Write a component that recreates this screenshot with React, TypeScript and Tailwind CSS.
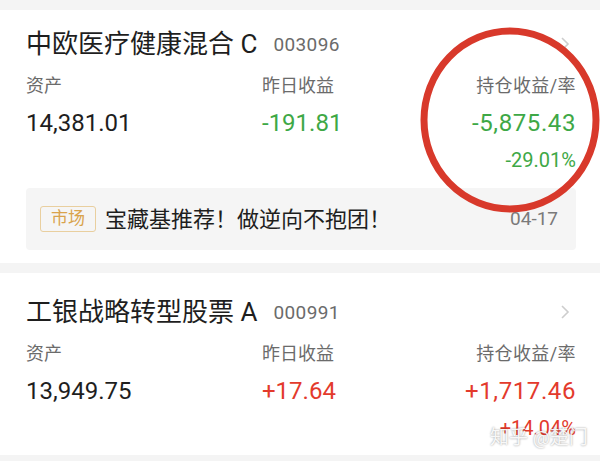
import type { ReactNode } from 'react'

type Fund = {
  name: string
  code: string
  asset: string
  yesterday: string
  holding: string
  rate: string
  up: boolean
}

const funds: Fund[] = [
  {
    name: '中欧医疗健康混合 C',
    code: '003096',
    asset: '14,381.01',
    yesterday: '-191.81',
    holding: '-5,875.43',
    rate: '-29.01%',
    up: false,
  },
  {
    name: '工银战略转型股票 A',
    code: '000991',
    asset: '13,949.75',
    yesterday: '+17.64',
    holding: '+1,717.46',
    rate: '+14.04%',
    up: true,
  },
]

function Chevron() {
  return (
    <svg width="10" height="16" viewBox="0 0 10 16" className="ml-auto mr-[6px] self-center">
      <polyline points="2,2 8,8 2,14" fill="none" stroke="#cdcdcd" strokeWidth="1.6" />
    </svg>
  )
}

function FundCard({ fund, top, children }: { fund: Fund; top: string; children?: ReactNode }) {
  const color = fund.up ? 'text-[#e33a2c]' : 'text-[#3ea846]'
  return (
    <section className={`bg-white pl-[26px] pr-[24px] ${top}`}>
      <div className="flex h-[36px] items-center">
        <span className="whitespace-pre text-[26px] leading-[36px] text-[#1e1e1e]">{fund.name}</span>
        <span className="ml-[16px] mt-[2px] text-[19px] leading-[36px] tracking-[0.4px] text-[#6b6b6b]">
          {fund.code}
        </span>
        <Chevron />
      </div>
      <div className="mt-[12px] grid grid-cols-[236px_1fr_auto] text-[18px] leading-[24px] text-[#6b6b6b]">
        <span>资产</span>
        <span>昨日收益</span>
        <span className="text-right tracking-[0.4px]">持仓收益/率</span>
      </div>
      <div className="mt-[9px] grid grid-cols-[236px_1fr_auto] text-[24px] leading-[32px]">
        <span className="text-[#1e1e1e]">{fund.asset}</span>
        <span className={color}>{fund.yesterday}</span>
        <span className={`text-right tracking-[0.6px] ${color}`}>{fund.holding}</span>
      </div>
      <div className={`mt-[8px] text-right text-[20px] leading-[26px] ${color}`}>{fund.rate}</div>
      {children}
    </section>
  )
}

export default function App() {
  return (
    <div
      className="relative h-[461px] w-[600px] overflow-hidden bg-[#f4f4f4]"
      style={{ fontFamily: 'Roboto, "Noto Sans CJK SC", sans-serif' }}
    >
      <div className="h-[10px]" />
      <FundCard fund={funds[0]} top="pt-[16px] pb-[13px]">
        <div className="mt-[15px] flex h-[62px] items-center rounded-[4px] bg-[#f5f5f5] pl-[14px] pr-[18px]">
          <span className="flex h-[26px] w-[56px] items-center justify-center rounded-[3px] border border-[#e9cf9f] text-[17px] text-[#d9a34c]">
            市场
          </span>
          <span className="ml-[9px] text-[22px] text-[#1e1e1e]">宝藏基推荐！做逆向不抱团！</span>
          <span className="ml-auto text-[19px] text-[#7a7a7a]">04-17</span>
        </div>
      </FundCard>
      <div className="h-[10px]" />
      <FundCard fund={funds[1]} top="pt-[21px] pb-[14px]" />

      <svg className="pointer-events-none absolute left-0 top-0" width="600" height="461">
        <ellipse cx="510" cy="120" rx="86" ry="89" fill="none" stroke="#d8392b" strokeWidth="7" />
      </svg>
      <span
        className="absolute left-[490px] top-[424px] text-[19px] text-white/90"
        style={{ textShadow: '0 0 2px rgba(0,0,0,0.45)' }}
      >
        知乎 @楚门
      </span>
    </div>
  )
}
